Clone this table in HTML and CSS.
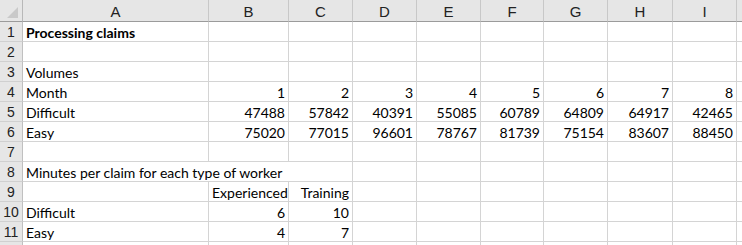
FILE: index.html
```html
<!DOCTYPE html>
<html lang="en">
<head>
    <meta charset="UTF-8">
    <title>Processing claims</title>
    <link rel="stylesheet" href="styles.css">
</head>
<body>
    <div class="sheet">
        <!-- column headers -->
        <div class="corner"><span class="tri"></span></div>
        <div class="colhead">A</div>
        <div class="colhead">B</div>
        <div class="colhead">C</div>
        <div class="colhead">D</div>
        <div class="colhead">E</div>
        <div class="colhead">F</div>
        <div class="colhead">G</div>
        <div class="colhead">H</div>
        <div class="colhead">I</div>
        <div class="colhead last"></div>

        <!-- row 1 -->
        <div class="rowhead">1</div>
        <div class="cell bold">Processing claims</div>
        <div class="cell"></div><div class="cell"></div><div class="cell"></div><div class="cell"></div>
        <div class="cell"></div><div class="cell"></div><div class="cell"></div><div class="cell"></div><div class="cell"></div>

        <!-- row 2 -->
        <div class="rowhead">2</div>
        <div class="cell"></div>
        <div class="cell"></div><div class="cell"></div><div class="cell"></div><div class="cell"></div>
        <div class="cell"></div><div class="cell"></div><div class="cell"></div><div class="cell"></div><div class="cell"></div>

        <!-- row 3 -->
        <div class="rowhead">3</div>
        <div class="cell">Volumes</div>
        <div class="cell"></div><div class="cell"></div><div class="cell"></div><div class="cell"></div>
        <div class="cell"></div><div class="cell"></div><div class="cell"></div><div class="cell"></div><div class="cell"></div>

        <!-- row 4 -->
        <div class="rowhead">4</div>
        <div class="cell">Month</div>
        <div class="cell num">1</div><div class="cell num">2</div><div class="cell num">3</div><div class="cell num">4</div>
        <div class="cell num">5</div><div class="cell num">6</div><div class="cell num">7</div><div class="cell num">8</div><div class="cell"></div>

        <!-- row 5 -->
        <div class="rowhead">5</div>
        <div class="cell">Difficult</div>
        <div class="cell num">47488</div><div class="cell num">57842</div><div class="cell num">40391</div><div class="cell num">55085</div>
        <div class="cell num">60789</div><div class="cell num">64809</div><div class="cell num">64917</div><div class="cell num">42465</div><div class="cell"></div>

        <!-- row 6 -->
        <div class="rowhead">6</div>
        <div class="cell">Easy</div>
        <div class="cell num">75020</div><div class="cell num">77015</div><div class="cell num">96601</div><div class="cell num">78767</div>
        <div class="cell num">81739</div><div class="cell num">75154</div><div class="cell num">83607</div><div class="cell num">88450</div><div class="cell"></div>

        <!-- row 7 -->
        <div class="rowhead">7</div>
        <div class="cell"></div>
        <div class="cell"></div><div class="cell"></div><div class="cell"></div><div class="cell"></div>
        <div class="cell"></div><div class="cell"></div><div class="cell"></div><div class="cell"></div><div class="cell"></div>

        <!-- row 8: text spills over B and C -->
        <div class="rowhead">8</div>
        <div class="cell span3">Minutes per claim for each type of worker</div>
        <div class="cell"></div><div class="cell"></div><div class="cell"></div>
        <div class="cell"></div><div class="cell"></div><div class="cell"></div><div class="cell"></div>

        <!-- row 9 -->
        <div class="rowhead">9</div>
        <div class="cell"></div>
        <div class="cell num">Experienced</div><div class="cell num">Training</div><div class="cell"></div><div class="cell"></div>
        <div class="cell"></div><div class="cell"></div><div class="cell"></div><div class="cell"></div><div class="cell"></div>

        <!-- row 10 -->
        <div class="rowhead">10</div>
        <div class="cell">Difficult</div>
        <div class="cell num">6</div><div class="cell num">10</div><div class="cell"></div><div class="cell"></div>
        <div class="cell"></div><div class="cell"></div><div class="cell"></div><div class="cell"></div><div class="cell"></div>

        <!-- row 11 -->
        <div class="rowhead">11</div>
        <div class="cell">Easy</div>
        <div class="cell num">4</div><div class="cell num">7</div><div class="cell"></div><div class="cell"></div>
        <div class="cell"></div><div class="cell"></div><div class="cell"></div><div class="cell"></div><div class="cell"></div>

        <!-- row 12 (only its top edge is on screen) -->
        <div class="rowhead"></div>
        <div class="cell"></div>
        <div class="cell"></div><div class="cell"></div><div class="cell"></div><div class="cell"></div>
        <div class="cell"></div><div class="cell"></div><div class="cell"></div><div class="cell"></div><div class="cell"></div>
    </div>
</body>
</html>
```

FILE: styles.css
```css
/* Page */
body {
    margin: 0;
    background: #ffffff;
    overflow: hidden;
}

/* Worksheet grid: row header + columns A..I + a bit of J */
.sheet {
    display: grid;
    grid-template-columns: 23px 186px 80px 64px 64px 64px 63px 64px 65px 64px 40px;
    grid-auto-rows: 20px;
    grid-template-rows: 22px;
    font-family: Lato, "Open Sans", sans-serif;
    font-size: 14px;
    color: #000000;
}

/* Header strip */
.corner,
.colhead {
    background: #e6e6e6;
    border-bottom: 1px solid #9b9b9b;
    border-right: 1px solid #c8c8c8;
}

.corner {
    position: relative;
    border-right-color: #b8b8b8;
}

/* the little select-all triangle */
.corner .tri {
    position: absolute;
    right: 4px;
    bottom: 3px;
    width: 0;
    height: 0;
    border-left: 11px solid transparent;
    border-bottom: 11px solid #c9c9c9;
}

.colhead {
    font-family: "Liberation Sans", Arial, sans-serif;
    font-size: 15px;
    color: #222222;
    text-align: center;
    line-height: 22px;
    padding-top: 1px;
}

.colhead.last {
    border-right: none;
}

.rowhead {
    background: #e6e6e6;
    border-right: 1px solid #c0c0c0;
    border-bottom: 1px solid #d0d0d0;
    text-align: center;
    font-family: "Liberation Sans", Arial, sans-serif;
    font-size: 14px;
    line-height: 20px;
    color: #222222;
}

/* Cells */
.cell {
    border-right: 1px solid #d4d4d4;
    border-bottom: 1px solid #d4d4d4;
    padding: 1px 3px 0 3px;
    line-height: 20px;
    white-space: nowrap;
    overflow: visible;
}

.cell.bold {
    font-weight: bold;
}

.cell.num {
    text-align: right;
}

.cell.span3 {
    grid-column: span 3;
}
```
